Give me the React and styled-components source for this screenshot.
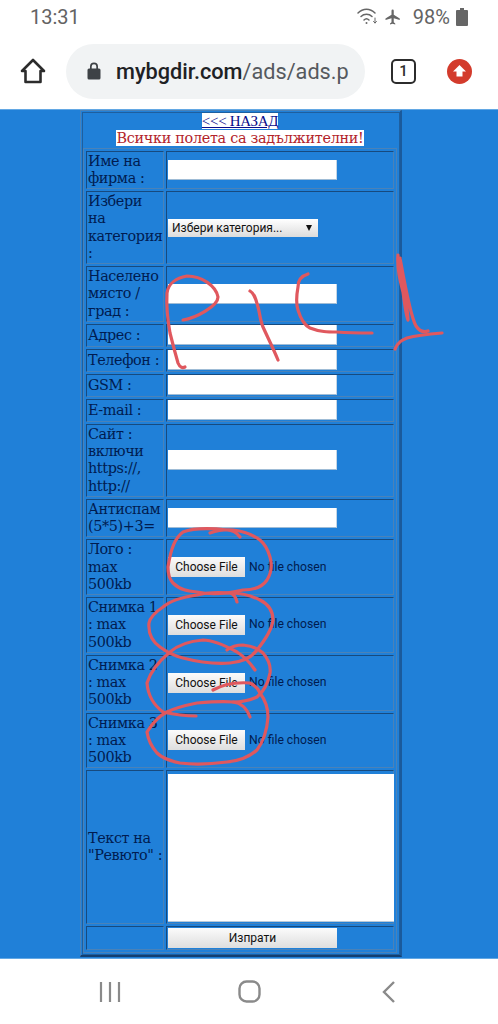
import React from 'react'
import styled, { createGlobalStyle } from 'styled-components'

const fields = [
  ['Име на фирма :', 'text'],
  ['Избери на категория :', 'select'],
  ['Населено място / град :', 'text'],
  ['Адрес :', 'text'],
  ['Телефон :', 'text'],
  ['GSM :', 'text'],
  ['E-mail :', 'text'],
  ['Сайт : включи https://, http://', 'text'],
  ['Антиспам (5*5)+3=', 'text'],
  ['Лого : max 500kb', 'file'],
  ['Снимка 1 : max 500kb', 'file'],
  ['Снимка 2 : max 500kb', 'file'],
  ['Снимка 3 : max 500kb', 'file'],
  ['Текст на "Ревюто"\u00a0:', 'area'],
  ['', 'submit'],
]

const strokes = [
  'M183 320 C196 318 218 306 218 297 C216 286 202 276 187 276 C176 278 168 284 167 293 C166 310 168 322 170 333 C173 345 176 356 178 363 C180 368 183 368 185 367',
  'M250 291 C255 294 256 300 258 307 C260 314 260 320 263 327 C268 338 274 350 278 360',
  'M308 274 C301 276 298 280 298 287 C296 298 296 304 298 310 C301 320 304 325 310 328 C320 332 328 332 337 332 C350 333 360 333 372 333',
  'M398 255 C397 268 400 280 403 292 C405 306 406 316 408 320 C408 310 403 285 400 258 C404 280 410 315 416 326 C420 332 425 332 428 331',
  'M395 349 C398 342 402 340 407 338 C418 335 430 334 442 333',
  'M240 537 C236 532 232 530 227 530 C210 528 194 528 183 532 C175 538 171 548 168 567 C168 575 170 580 173 583 C180 590 188 591 197 592 C212 595 230 593 243 590 C255 590 263 586 267 580 C272 572 272 564 270 557 C268 550 266 545 260 540 C252 534 242 531 233 530 C224 529 216 531 210 533',
  'M237 602 C236 597 233 594 230 593 C218 592 208 592 197 595 C183 597 170 601 163 607 C154 613 150 618 149 623 C148 634 153 642 160 647 C168 653 175 656 183 658 C198 662 215 664 230 663 C242 662 252 657 257 650 C265 640 272 630 273 620 C273 611 268 604 260 600 C250 595 240 593 230 593',
  'M227 650 C232 646 238 645 243 645 C252 646 259 649 263 653 C269 660 271 666 270 673 C268 684 263 692 257 697 C250 700 243 702 233 702',
  'M255 670 C251 664 245 657 237 652 C226 646 214 640 203 640 C190 641 178 645 170 652 C158 662 150 673 147 683 C148 696 155 706 163 712 C172 714 184 716 196 716',
  'M213 690 C222 685 236 682 250 683 C254 685 258 688 260 693 C266 701 268 709 268 717 C267 731 263 742 257 750 C248 758 238 761 227 762 C212 764 195 765 180 763 C170 761 162 758 157 753 C151 746 148 739 147 732 C152 724 159 716 167 712 C177 707 187 705 197 703 C209 702 222 701 233 702 C242 703 247 709 250 717',
]

const GlobalStyle = createGlobalStyle`
  html, body {
    margin: 0;
    background: #fff;
  }
`

const Phone = styled.div`
  position: relative;
  display: flex;
  flex-direction: column;
  width: 498px;
  height: 1024px;
  overflow: hidden;
  background: #fff;
  font-family: Roboto, sans-serif;
`

const StatusBar = styled.div`
  display: flex;
  align-items: center;
  justify-content: space-between;
  height: 33px;
  padding: 0 30px;
  color: #636363;
  font-size: 20px;
`

const StatusIcons = styled.div`
  display: flex;
  align-items: center;
  gap: 6px;
`

const Percent = styled.span`
  margin-left: 5px;
`

const Toolbar = styled.div`
  display: flex;
  align-items: center;
  height: 77px;
  padding: 0 26px 0 20px;
  border-bottom: 1px solid #63a8e4;
  box-sizing: border-box;
`

const UrlPill = styled.div`
  display: flex;
  align-items: center;
  width: 299px;
  height: 55px;
  margin: 0 26px 0 20px;
  padding: 0 10px 0 21px;
  box-sizing: border-box;
  border-radius: 28px;
  background: #f1f3f4;
  flex-shrink: 0;
`

const UrlText = styled.div`
  margin-left: 15px;
  white-space: nowrap;
  font-size: 21.7px;
  color: #55595e;
`

const Host = styled.span`
  color: #202124;
  font-weight: 500;
`

const TabCount = styled.div`
  display: flex;
  align-items: center;
  justify-content: center;
  width: 25px;
  height: 25px;
  box-sizing: border-box;
  border: 2.5px solid #2c2c2c;
  border-radius: 5px;
  color: #2c2c2c;
  font-size: 15px;
  font-weight: 500;
`

const UpdateBadge = styled.div`
  display: flex;
  align-items: center;
  justify-content: center;
  width: 25px;
  height: 25px;
  margin-left: 31px;
  border-radius: 50%;
  background: #d33b2c;
`

const Page = styled.main`
  flex: 1;
  background: #2080d8;
  overflow: hidden;
`

const Frame = styled.div`
  width: 322px;
  height: 847px;
  box-sizing: border-box;
  margin-left: 80px;
  padding: 2px 3px 0 2px;
  border-style: solid;
  border-color: #4a82b8 #1a5a9c #123f70 #4a82b8;
  border-width: 1px 2px 2px 1px;
  outline: 1px solid #1e5f9f;
  outline-offset: -3px;
  color: #001c50;
  font-family: "DejaVu Serif", serif;
  font-size: 14.4px;
  line-height: 17.25px;
`

const Notice = styled.div`
  text-align: center;
  white-space: nowrap;
  letter-spacing: -0.3px;
`

const BackLink = styled.a`
  background: #fff;
  color: #0b0b8a;
  font-family: "Liberation Serif", serif;
  font-size: 15px;
  text-decoration: underline;
`

const Warning = styled.span`
  background: #fff;
  color: #b3232a;
`

const FormTable = styled.table`
  width: 314px;
  border-collapse: separate;
  border-spacing: 2px;
  border: 1px solid #4a82b8;
  table-layout: fixed;
`

const Cell = styled.td`
  padding: 1px;
  border: 1px solid;
  border-color: #174a7e #4a82b8 #4a82b8 #174a7e;
  vertical-align: middle;
  letter-spacing: -0.4px;
`

const LabelCell = styled(Cell)`
  width: 74px;
`

const TextInput = styled.input`
  display: block;
  width: 169px;
  height: 20px;
  margin: -0.5px 0;
  padding: 0;
  box-sizing: border-box;
  border: 0;
  border-bottom: 1px solid #9fbcd6;
  border-right: 1px solid #c4d6e6;
  background: #fff;
`

const SelectWrap = styled.div`
  position: relative;
  width: 150px;
  height: 18px;
`

const Select = styled.select`
  display: block;
  width: 100%;
  height: 100%;
  padding: 0 0 0 4px;
  border: 0;
  appearance: none;
  border-radius: 0;
  background: linear-gradient(#fff, #dcdcdc);
  color: #111;
  font-family: Roboto, sans-serif;
  font-size: 12px;
`

const SelectArrow = styled.span`
  position: absolute;
  top: 6px;
  right: 6px;
  border-left: 3.5px solid transparent;
  border-right: 3.5px solid transparent;
  border-top: 6px solid #111;
`

const FileRow = styled.div`
  display: flex;
  align-items: center;
  gap: 4px;
  font-family: Roboto, sans-serif;
  font-size: 12.2px;
  letter-spacing: 0;
  color: #001c50;
`

const GreyButton = styled.button`
  height: 20px;
  padding: 0;
  border: 0;
  background: linear-gradient(#fbfbfb, #dedede);
  color: #111;
  font-family: Roboto, sans-serif;
  font-size: 12px;
`

const FileButton = styled(GreyButton)`
  width: 77px;
  flex-shrink: 0;
`

const SubmitButton = styled(GreyButton)`
  display: block;
  width: 169px;
`

const TextArea = styled.textarea`
  display: block;
  width: 226px;
  height: 148px;
  margin-top: 2px;
  padding: 0;
  box-sizing: border-box;
  border: 0;
  border-bottom: 1px solid #b9c9d8;
  background: #fff;
  resize: none;
`

const NavBar = styled.nav`
  display: flex;
  align-items: center;
  gap: 117px;
  height: 66px;
  padding: 0 0 0 99px;
  box-sizing: border-box;
  border-top: 1px solid #63a8e4;
`

const BackIcon = styled.svg`
  margin-left: 4px;
`

const Scribble = styled.svg`
  position: absolute;
  top: 0;
  left: 0;
  pointer-events: none;
`

const Control = ({ type }) => {
  if (type === 'select') {
    return (
      <SelectWrap>
        <Select defaultValue="">
          <option value="">Избери категория...</option>
        </Select>
        <SelectArrow />
      </SelectWrap>
    )
  }
  if (type === 'file') {
    return (
      <FileRow>
        <FileButton type="button">Choose File</FileButton>
        <span>No file chosen</span>
      </FileRow>
    )
  }
  if (type === 'area') return <TextArea />
  if (type === 'submit') return <SubmitButton type="button">Изпрати</SubmitButton>
  return <TextInput type="text" />
}

export default function App() {
  return (
    <Phone>
      <GlobalStyle />
      <StatusBar>
        <span>13:31</span>
        <StatusIcons>
          <svg width="22" height="20" viewBox="0 0 22 20" fill="none" stroke="#666" strokeWidth="1.5" strokeLinecap="round">
            <path d="M2 6 C7 1 14 1 19 6" />
            <path d="M5 9.5 C8 6.5 13 6.5 16 9.5" />
            <path d="M8 13 C9.5 11.5 11.5 11.5 13 13" />
            <circle cx="10.5" cy="16" r="1" fill="#666" stroke="none" />
            <path d="M19 11 V16 M17.5 14.5 L19 16 L20.5 14.5" strokeWidth="1" />
          </svg>
          <svg width="18" height="18" viewBox="0 0 24 24" fill="#666">
            <path d="M21 16v-2l-8-5V3.5a1.5 1.5 0 0 0-3 0V9l-8 5v2l8-2.5V19l-2 1.5V22l3.5-1 3.5 1v-1.5L13 19v-5.500z" />
          </svg>
          <Percent>98%</Percent>
          <svg width="12" height="18" viewBox="0 0 12 18" fill="#666">
            <path d="M4 0h4v2h3a1 1 0 0 1 1 1v14a1 1 0 0 1-1 1H1a1 1 0 0 1-1-1V3a1 1 0 0 1 1-1h3z" />
          </svg>
        </StatusIcons>
      </StatusBar>
      <Toolbar>
        <svg width="26" height="26" viewBox="0 0 26 26" fill="none" stroke="#2c2c2c" strokeWidth="2.6" strokeLinejoin="round">
          <path d="M2 13 L13 2 L24 13 H20.500 V24 H5.500 V13 Z" />
        </svg>
        <UrlPill>
          <svg width="14" height="18" viewBox="0 0 14 18" fill="#3e4246">
            <path d="M2 6.500 H3 V4.500 a4 4 0 0 1 8 0 V6.500 H12 a1.500 1.500 0 0 1 1.500 1.500 V16 a1.500 1.500 0 0 1-1.500 1.500 H2 A1.500 1.500 0 0 1 .5 16 V8 A1.500 1.500 0 0 1 2 6.500 z M4.700 6.500 H9.300 V4.500 a2.300 2.300 0 0 0-4.600 0 z" />
          </svg>
          <UrlText>
            <Host>mybgdir.com</Host>/ads/ads.p
          </UrlText>
        </UrlPill>
        <TabCount>1</TabCount>
        <UpdateBadge>
          <svg width="15" height="14" viewBox="0 0 15 14" fill="#fff">
            <path d="M7.500 1 L14 7.500 H10.500 V12.500 H4.500 V7.500 H1 Z" />
          </svg>
        </UpdateBadge>
      </Toolbar>
      <Page>
        <Frame>
          <Notice>
            <BackLink href="#">&lt;&lt;&lt; НАЗАД</BackLink>
          </Notice>
          <Notice>
            <Warning>Всички полета са задължителни!</Warning>
          </Notice>
          <FormTable>
            <tbody>
              {fields.map(([label, type]) => (
                <tr key={label + type}>
                  <LabelCell>{label}</LabelCell>
                  <Cell>
                    <Control type={type} />
                  </Cell>
                </tr>
              ))}
            </tbody>
          </FormTable>
        </Frame>
      </Page>
      <NavBar>
        <svg width="22" height="22" viewBox="0 0 22 22" fill="none" stroke="#8a8a8a" strokeWidth="2.200">
          <path d="M2 1 V21 M11 1 V21 M20 1 V21" />
        </svg>
        <svg width="23" height="23" viewBox="0 0 23 23" fill="none" stroke="#8a8a8a" strokeWidth="2.400">
          <rect x="1.500" y="1.500" width="20" height="20" rx="7" />
        </svg>
        <BackIcon width="14" height="22" viewBox="0 0 14 22" fill="none" stroke="#8a8a8a" strokeWidth="2.400">
          <path d="M12 1 L2 11 L12 21" />
        </BackIcon>
      </NavBar>
      <Scribble width="498" height="1024" viewBox="0 0 498 1024" fill="none" stroke="#e0585e" strokeWidth="3.2" strokeLinecap="round" strokeLinejoin="round">
        {strokes.map((d) => (
          <path key={d} d={d} />
        ))}
      </Scribble>
    </Phone>
  )
}
